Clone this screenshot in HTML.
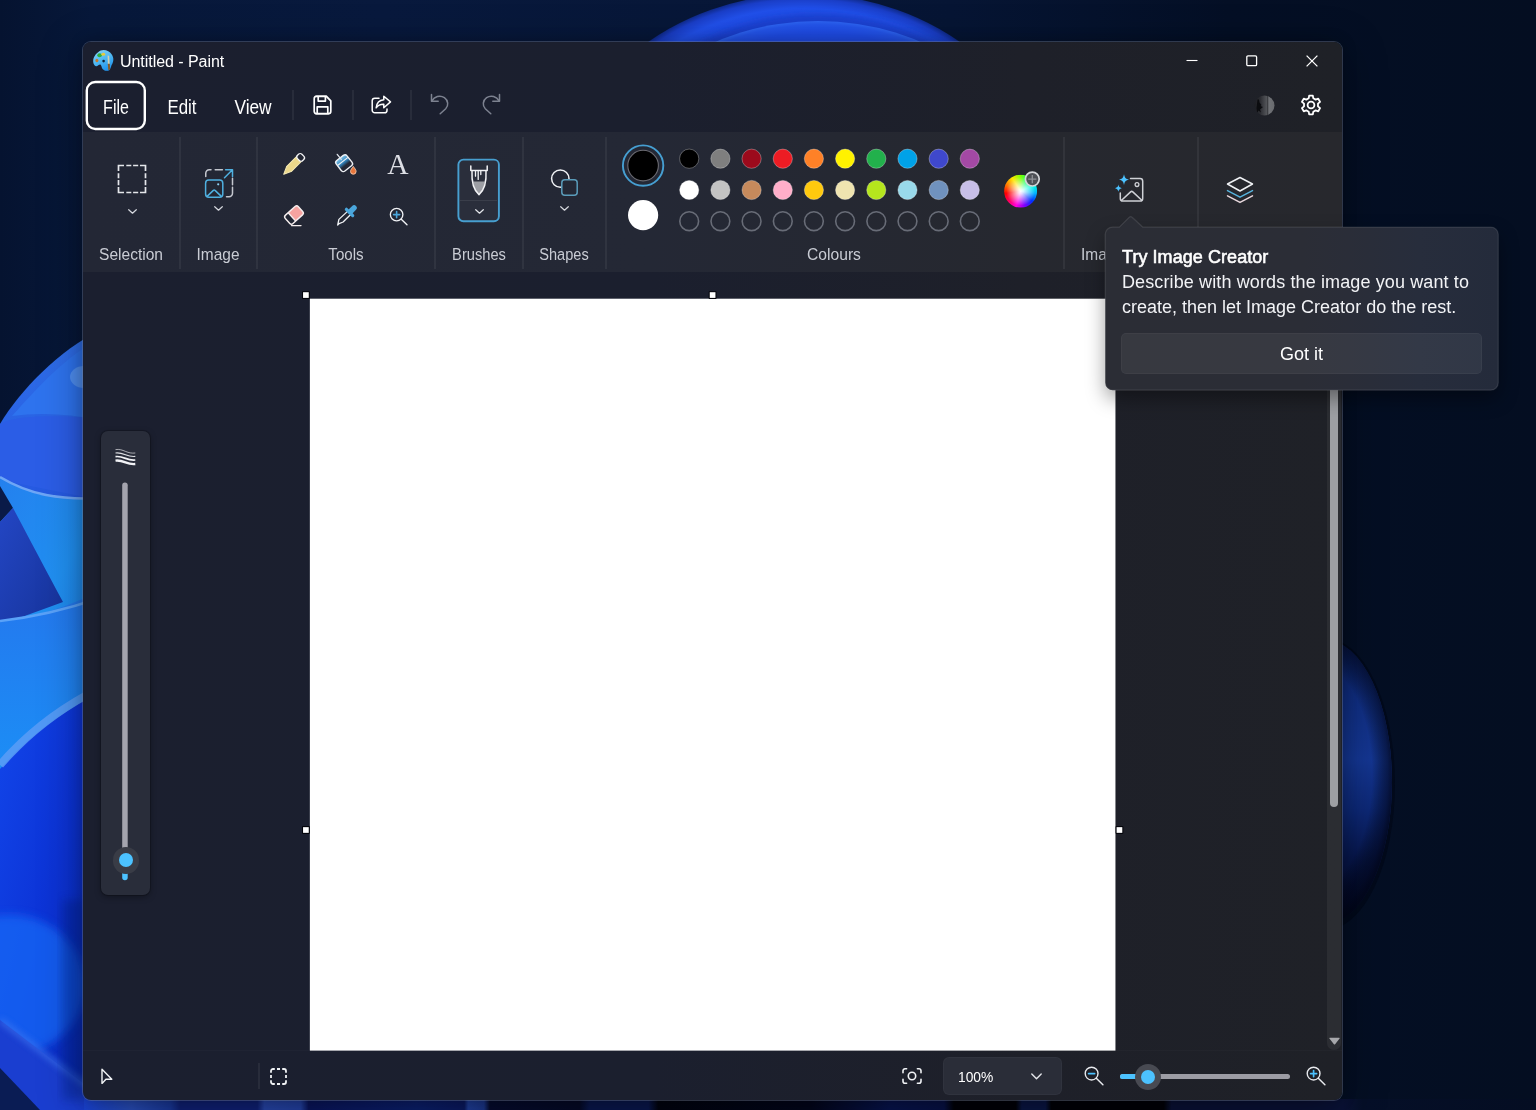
<!DOCTYPE html>
<html lang="en">
<head>
<meta charset="utf-8">
<title>Untitled - Paint</title>
<style>
*{box-sizing:border-box;margin:0;padding:0}
html,body{width:1536px;height:1110px;overflow:hidden;background:#04112a}
body{position:relative;font-family:"Liberation Sans","DejaVu Sans",sans-serif;color:#fff}
.abs{position:absolute}
#wall{position:absolute;left:0;top:0;width:1536px;height:1110px}
#win{position:absolute;left:83px;top:42px;width:1259px;height:1058px;border-radius:8px;
 background:linear-gradient(90deg,#1b1f2f 0%,#1b1f2e 45%,#1e2029 75%,#1f2127 100%);
 box-shadow:0 0 0 1px rgba(120,132,155,.38),0 10px 44px rgba(0,0,0,.36),0 0 16px rgba(0,0,0,.2);overflow:hidden}
#ribbon{position:absolute;left:0;top:90px;width:1259px;height:140px;
 background:linear-gradient(90deg,#232735 0%,#242835 45%,#26282f 75%,#27282d 100%)}
#status{position:absolute;left:0;top:1008px;width:1259px;height:50px;border-top:1px solid rgba(255,255,255,.02)}
.hd{position:absolute;width:8px;height:8px;background:#fff;border:1px solid #05060a}
.sep{position:absolute;width:2px;background:rgba(255,255,255,.06)}
.lbl{position:absolute;top:244px;font-size:16.300px;color:#c9ccd4;white-space:nowrap;transform:translateX(-50%) scaleX(var(--k,.95));line-height:20px}

#title{position:absolute;left:120px;top:51.500px;font-size:16px;line-height:20px;color:#fff;white-space:nowrap;letter-spacing:-.05px}
.menu{position:absolute;top:94.500px;font-size:20px;line-height:24px;color:#fff;white-space:nowrap;transform:translateX(-50%) scaleX(var(--k,.85))}
#filebtn{position:absolute;left:85.500px;top:81px;width:60.500px;height:49.500px;border:2px solid #fff;border-radius:9.500px}
svg.ic{position:absolute;overflow:visible}

.sw{position:absolute;width:20px;height:20px;border-radius:50%;border:1px solid rgba(255,255,255,.28)}
.sw.e{border:1.500px solid #6d717c;background:transparent}
#tipsh{position:absolute;left:1106px;top:228px;width:392px;height:162px;border-radius:8px;background:#2b2d36;box-shadow:0 8px 20px rgba(0,0,0,.4)}
#tip{position:absolute;left:1105px;top:227px;width:393px;height:163px}
#tip .t{position:absolute;left:17px;top:18px;font-size:18px;font-weight:400;-webkit-text-stroke:.55px #fff;letter-spacing:.06px;line-height:24px;white-space:nowrap}
#tip .d{position:absolute;left:17px;font-size:18px;line-height:24px;white-space:nowrap;color:#f2f3f6}
#gotit{position:absolute;left:16px;top:106px;width:361px;height:41px;border-radius:5px;background:rgba(255,255,255,.058);
 box-shadow:inset 0 0 0 1px rgba(255,255,255,.035);text-align:center;font-size:18px;line-height:43px}
#stage{position:absolute;left:0;top:0;width:1536px;height:1110px;will-change:transform}
</style>
</head>
<body>
<div id="stage">
<svg id="wall" viewBox="0 0 1536 1110">
<defs>
<filter id="bl3" x="-10%" y="-10%" width="120%" height="120%"><feGaussianBlur stdDeviation="3"/></filter><filter id="bl6" x="-20%" y="-20%" width="140%" height="140%"><feGaussianBlur stdDeviation="5"/></filter>
<linearGradient id="bgH" x1="0" y1="0" x2="1" y2="0">
 <stop offset="0" stop-color="#051330"/><stop offset=".06" stop-color="#07183a"/><stop offset=".25" stop-color="#08193d"/><stop offset=".62" stop-color="#061534"/><stop offset=".8" stop-color="#040f25"/><stop offset="1" stop-color="#040e21"/>
</linearGradient>
<radialGradient id="dome" cx="804" cy="200" r="243" gradientUnits="userSpaceOnUse" gradientTransform="translate(804 200) scale(1 .848) translate(-804 -200)">
 <stop offset="0" stop-color="#1f4ce8"/><stop offset=".8" stop-color="#1c46e2"/><stop offset=".93" stop-color="#2150ea"/><stop offset=".975" stop-color="#1a3ec8"/><stop offset="1" stop-color="#0f2a8a"/>
</radialGradient>
<radialGradient id="dome2" cx="818" cy="171" r="202" gradientUnits="userSpaceOnUse" gradientTransform="translate(818 171) scale(1 .7426) translate(-818 -171)">
 <stop offset="0" stop-color="#1e4ae6"/><stop offset=".92" stop-color="#1f4ce8"/><stop offset=".975" stop-color="#2455ec"/><stop offset="1" stop-color="#2d64f2"/>
</radialGradient>
<linearGradient id="rdome" x1="0" y1="0" x2="0" y2="1"><stop offset="0" stop-color="#0a1f60"/><stop offset=".2" stop-color="#102e82"/><stop offset=".42" stop-color="#143692"/><stop offset=".6" stop-color="#0d2876"/><stop offset=".78" stop-color="#07164a"/><stop offset=".92" stop-color="#040c30"/><stop offset="1" stop-color="#030820"/></linearGradient>
<radialGradient id="rdome2" cx="1318" cy="775" r="150" gradientUnits="userSpaceOnUse" gradientTransform="translate(1318 775) scale(.5 1) translate(-1318 -775)"><stop offset="0" stop-color="#000" stop-opacity="0"/><stop offset=".72" stop-color="#000" stop-opacity="0"/><stop offset=".93" stop-color="#020618" stop-opacity=".55"/><stop offset="1" stop-color="#020618" stop-opacity=".8"/></radialGradient>
<linearGradient id="p1" x1="0" y1="0" x2="0" y2="1"><stop offset="0" stop-color="#2f6fe8"/><stop offset="1" stop-color="#2456e0"/></linearGradient>
<linearGradient id="p2" x1="0" y1="0" x2="1" y2="1"><stop offset="0" stop-color="#2480ee"/><stop offset=".6" stop-color="#2090f2"/><stop offset="1" stop-color="#1e84ea"/></linearGradient>
<linearGradient id="p3" x1="0" y1="0" x2="1" y2="1"><stop offset="0" stop-color="#2346c4"/><stop offset="1" stop-color="#16339a"/></linearGradient>
<linearGradient id="p4" x1="0" y1="0" x2="0" y2="1"><stop offset="0" stop-color="#2478ee"/><stop offset="1" stop-color="#1b8ff6"/></linearGradient>
<linearGradient id="p5" x1="0" y1="0" x2="1" y2="1"><stop offset="0" stop-color="#1246ea"/><stop offset=".5" stop-color="#0c33d6"/><stop offset="1" stop-color="#0a2ab4"/></linearGradient>
</defs>
<rect width="1536" height="1110" fill="url(#bgH)"/>
<!-- top dome -->
<ellipse cx="804" cy="200" rx="243" ry="206" fill="url(#dome)"/>
<ellipse cx="818" cy="167" rx="205" ry="153" fill="#1436b8" opacity=".5" filter="url(#bl3)"/><ellipse cx="818" cy="171" rx="202" ry="150" fill="url(#dome2)"/>
<!-- right sphere -->
<ellipse cx="1325" cy="784" rx="70" ry="146" fill="#020716" opacity=".6"/><ellipse cx="1325" cy="782" rx="67" ry="142" fill="url(#rdome)"/><ellipse cx="1325" cy="782" rx="67" ry="142" fill="url(#rdome2)"/>
<!-- left petals -->
<path d="M100 330 C60 350 20 390 0 424 L0 500 L100 520 Z" fill="url(#p1)"/>
<path d="M100 340 C70 352 40 385 12 416 C40 412 70 414 100 420 Z" fill="#2f74ee" opacity=".9"/><ellipse cx="84" cy="377" rx="14" ry="11" fill="#5b98f4" opacity=".75"/><path d="M0 424 C10 418 40 413 100 419 L100 500 L0 480 Z" fill="#2b5de6"/>
<path d="M0 477 C30 495 60 500 100 498 L100 640 L0 640 Z" fill="url(#p2)"/>
<path d="M0 477 C30 495 60 500 100 498" fill="none" stroke="#6ea6f6" stroke-width="2.5"/>
<path d="M0 486 L13 508 L0 522 Z" fill="#0a1a48"/>
<path d="M0 522 L13 508 C30 540 48 574 63 602 L0 625 Z" fill="url(#p3)"/>
<path d="M0 621 C35 617 65 608 100 591 L100 780 L0 780 Z" fill="url(#p4)"/>
<path d="M0 621 C35 617 65 610 100 598" fill="none" stroke="#5aa2f8" stroke-width="2.5"/>
<path d="M0 769 C25 740 60 712 100 692 L100 1110 L0 1110 Z" fill="url(#p5)"/>
<path d="M0 765 C25 736 60 708 100 688" fill="none" stroke="#5b9cf6" stroke-width="8" opacity=".85"/>
<ellipse cx="10" cy="985" rx="75" ry="70" fill="#1468f6" opacity=".75" filter="url(#bl6)"/>
<path d="M0 1020 L100 1096 L100 1110 L0 1110 Z" fill="#1a3ed0"/>
<path d="M0 1020 L100 1096" stroke="#3f78f2" stroke-width="5" opacity=".75" filter="url(#bl3)"/>
<path d="M0 1068 L40 1110 L0 1110 Z" fill="#0a1c54"/>
<rect x="62" y="900" width="22" height="200" fill="#061a80" opacity=".35" filter="url(#bl6)"/>
<!-- bottom strip -->
<linearGradient id="bot" x1="0" y1="0" x2="1" y2="0"><stop offset="0.0000" stop-color="#1a44d8"/><stop offset="0.0142" stop-color="#1f48cc"/><stop offset="0.0326" stop-color="#2a50c0"/><stop offset="0.0597" stop-color="#1a3aa0"/><stop offset="0.0665" stop-color="#10227a"/><stop offset="0.1194" stop-color="#10227a"/><stop offset="0.1242" stop-color="#2848b0"/><stop offset="0.1493" stop-color="#2443a8"/><stop offset="0.1547" stop-color="#0a1660"/><stop offset="0.2293" stop-color="#0c2070"/><stop offset="0.2619" stop-color="#0b1a64"/><stop offset="0.2646" stop-color="#2040a0"/><stop offset="0.2754" stop-color="#1c3890"/><stop offset="0.2795" stop-color="#060c30"/><stop offset="0.3412" stop-color="#050a28"/><stop offset="0.3480" stop-color="#0a1850"/><stop offset="0.3887" stop-color="#0a1850"/><stop offset="0.3955" stop-color="#020410"/><stop offset="0.5007" stop-color="#03061c"/><stop offset="0.5550" stop-color="#081450"/><stop offset="0.5923" stop-color="#081248"/><stop offset="0.5991" stop-color="#010208"/><stop offset="0.6418" stop-color="#010208"/><stop offset="0.6459" stop-color="#0a1646"/><stop offset="0.6621" stop-color="#0a1646"/><stop offset="0.6662" stop-color="#010208"/><stop offset="0.7436" stop-color="#010208"/><stop offset="0.7490" stop-color="#0a1238"/><stop offset="0.8670" stop-color="#0a1238"/><stop offset="0.8806" stop-color="#050f28"/><stop offset="1.0000" stop-color="#040d22"/></linearGradient><rect x="84" y="1099" width="1452" height="11" fill="url(#bot)"/>
</svg>
<div id="win">
  <div id="ribbon"></div>
  <div id="status"></div>
</div>

<!-- title bar -->
<svg class="ic" style="left:92px;top:49px" width="22" height="23" viewBox="0 0 22 23">
 <defs><linearGradient id="pal" x1="0" y1="0" x2=".5" y2="1"><stop offset="0" stop-color="#8fd6f7"/><stop offset=".55" stop-color="#4fb8f2"/><stop offset="1" stop-color="#2496ee"/></linearGradient></defs>
 <path d="M11.500 1.100C15 1.100 18 3 19.600 5.300C21 7.500 21.600 9.500 21.300 11.300C21 13.500 20.400 15 19.600 16.100C19 18 18.500 20 17.500 21C16 22 14 22 12.600 21.500C11 20.800 10.300 19.800 9.900 18.800C9.500 17.500 9.300 16.300 8.300 15.600C7.200 15.200 5.500 17.600 4 17.200C2.500 16.600 1.500 15 1.300 13.400C1 11.500 1.300 9.700 2.100 8C3 6 4.400 4.400 6.100 3.200C7.700 2 9.500 1.100 11.500 1.100Z" fill="url(#pal)"/>
 <ellipse cx="7.600" cy="6.200" rx="2.300" ry="2" fill="#2fae3a"/>
 <ellipse cx="11.300" cy="5.200" rx="1.900" ry="1.500" fill="#e8c93a"/>
 <ellipse cx="4.900" cy="11.500" rx="1.500" ry="1.700" fill="#c9792a"/>
 <circle cx="11.600" cy="12.100" r="1.300" fill="#0e2238"/>
 <path d="M15.600 6.500l1.600.200.500 8.300-1.900.100z" fill="#cfd0b4"/>
 <path d="M15.800 14.800l2-.100.300 5.800-1.800.500z" fill="#8a5a24"/>
</svg>
<div id="title">Untitled - Paint</div>
<svg class="ic" style="left:1185.600px;top:54px" width="12" height="12" viewBox="0 0 12 12"><path d="M.5 6.500h11" stroke="#fff" stroke-width="1.100" fill="none"/></svg>
<svg class="ic" style="left:1245.800px;top:54.700px" width="12" height="12" viewBox="0 0 12 12"><rect x=".8" y=".8" width="9.800" height="9.800" rx="1.200" stroke="#fff" stroke-width="1.300" fill="none"/></svg>
<svg class="ic" style="left:1305.800px;top:54.600px" width="12" height="12" viewBox="0 0 12 12"><path d="M.6.600l10.800 10.800M11.400.600L.6 11.400" stroke="#fff" stroke-width="1.300" fill="none"/></svg>
<!-- menu bar -->
<svg class="ic" style="left:84px;top:79px" width="64" height="54" viewBox="0 0 64 54"><rect x="2.800" y="3" width="58" height="47" rx="8.500" fill="none" stroke="#fff" stroke-width="2.400"/></svg>
<div class="menu" style="left:116px;--k:.8">File</div>
<div class="menu" style="left:181.500px;--k:.845">Edit</div>
<div class="menu" style="left:252.700px;--k:.865">View</div>
<div class="sep" style="left:292px;top:90px;height:30px"></div>
<div class="sep" style="left:352px;top:90px;height:30px"></div>
<div class="sep" style="left:410px;top:90px;height:30px"></div>
<!-- save -->
<svg class="ic" style="left:313px;top:95px" width="19" height="20" viewBox="0 0 19 19" preserveAspectRatio="none" fill="none" stroke="#fff" stroke-width="1.700" stroke-linejoin="round">
 <path d="M3.500 1.200h9.800l4.500 4.300v10a2.300 2.300 0 0 1-2.300 2.300h-12a2.300 2.300 0 0 1-2.300-2.300v-12a2.300 2.300 0 0 1 2.300-2.300z"/>
 <path d="M5.200 1.400v4.400h7.200v-4.400"/><path d="M4.200 17.600v-6.400h10.600v6.400"/>
</svg>
<!-- share -->
<svg class="ic" style="left:371px;top:95px" width="21" height="19" viewBox="0 0 21 19" fill="none" stroke="#fff" stroke-width="1.500" stroke-linejoin="round" stroke-linecap="round">
 <path d="M8 3.200h-4.200a2.600 2.600 0 0 0-2.600 2.600v9.400a2.600 2.600 0 0 0 2.600 2.600h9.600a2.600 2.600 0 0 0 2.600-2.600v-1.200"/>
 <path d="M12.800 1.200l6.700 5.700-6.700 5.800v-3.400c-3.600-.2-5.800 1-7.600 3.500.4-4.300 2.800-7.600 7.600-8z"/>
</svg>
<!-- undo / redo -->
<svg class="ic" style="left:430px;top:93px" width="20" height="22" viewBox="0 0 20 22" fill="none" stroke="#7d8290" stroke-width="1.500" stroke-linecap="round" stroke-linejoin="round">
 <path d="M1.500 1.500v6.700h6.700"/><path d="M1.800 8c2.600-4.300 8-6.500 12.600-3.300 4 2.800 4.300 8 1.300 11l-5.500 5"/>
</svg>
<svg class="ic" style="left:481px;top:93px" width="20" height="22" viewBox="0 0 20 22" fill="none" stroke="#7d8290" stroke-width="1.500" stroke-linecap="round" stroke-linejoin="round">
 <path d="M18.500 1.500v6.700h-6.700"/><path d="M18.200 8c-2.600-4.300-8-6.500-12.600-3.300-4 2.800-4.300 8-1.300 11l5.500 5"/>
</svg>
<!-- avatar + settings -->
<svg class="ic" style="left:1254px;top:95px" width="21" height="21" viewBox="0 0 21 21"><defs><clipPath id="av"><circle cx="10.500" cy="10.500" r="10"/></clipPath><linearGradient id="avg" x1="0" y1="0" x2="1" y2="0"><stop offset="0" stop-color="#1b1c21"/><stop offset=".3" stop-color="#2c2d32"/><stop offset=".62" stop-color="#55575b"/><stop offset=".66" stop-color="#2a2b2f"/><stop offset=".7" stop-color="#707276"/><stop offset="1" stop-color="#67696d"/></linearGradient></defs>
 <g clip-path="url(#av)"><rect width="21" height="21" fill="url(#avg)"/><path d="M3.500 4.500l1.500 0 .5 3 2 2.500-1 1 2.500 1-3 2.500 1 3-2.500-2-1.500 2.500-.5-5z" fill="#0b0c0f"/></g></svg>
<svg class="ic" style="left:1299.500px;top:94px" width="22" height="22" viewBox="0 0 22 22" fill="none" stroke="#fff" stroke-width="1.800" stroke-linejoin="round">
 <path d="M8.69 4.29 L9.17 1.58 L12.83 1.58 L13.31 4.29 L15.66 5.64 L18.25 4.70 L20.08 7.87 L17.97 9.65 L17.97 12.35 L20.08 14.13 L18.25 17.30 L15.66 16.36 L13.31 17.71 L12.83 20.42 L9.17 20.42 L8.69 17.71 L6.34 16.36 L3.75 17.30 L1.92 14.13 L4.03 12.35 L4.03 9.65 L1.92 7.87 L3.75 4.70 L6.34 5.64Z"/><circle cx="11" cy="11" r="3.400"/>
</svg>

<!-- ribbon separators -->
<div class="sep" style="left:179px;top:137px;height:132px"></div>
<div class="sep" style="left:256px;top:137px;height:132px"></div>
<div class="sep" style="left:434px;top:137px;height:132px"></div>
<div class="sep" style="left:522px;top:137px;height:132px"></div>
<div class="sep" style="left:605px;top:137px;height:132px"></div>
<div class="sep" style="left:1063px;top:137px;height:132px"></div>
<div class="sep" style="left:1197px;top:137px;height:132px"></div>
<!-- labels -->
<div class="lbl" style="left:131px;--k:.955">Selection</div>
<div class="lbl" style="left:218px;--k:.95">Image</div>
<div class="lbl" style="left:346px;--k:.93">Tools</div>
<div class="lbl" style="left:478.500px;--k:.9">Brushes</div>
<div class="lbl" style="left:564px;--k:.895">Shapes</div>
<div class="lbl" style="left:834px;--k:.96">Colours</div>
<div class="lbl" style="left:1081px;transform-origin:0 50%;transform:scaleX(.95)">Image Creator</div>
<!-- selection -->
<svg class="ic" style="left:117px;top:163.800px" width="30" height="30" viewBox="0 0 30 30" fill="none" stroke="#e4e6ea" stroke-width="1.700">
 <path d="M1.500 7v-5.500h5.500M9.300 1.500h5M16.100 1.500h5.100M23 1.500h5.500v5.500M28.500 9.300v5M28.500 16.100v5.100M28.500 23v5.500h-5.500M21.200 28.500h-5.100M14.300 28.500h-5M7 28.500h-5.500v-5.500M1.500 21.200v-5.100M1.500 14.300v-5"/>
</svg>
<svg class="ic" style="left:127.500px;top:208.500px" width="9" height="5" viewBox="0 0 9 5"><path d="M.7.700L4.500 4.200 8.300.700" fill="none" stroke="#d6d8de" stroke-width="1.200" stroke-linecap="round" stroke-linejoin="round"/></svg>
<!-- image group -->
<svg class="ic" style="left:203.500px;top:167.500px" width="31" height="31" viewBox="0 0 31 31" fill="none" stroke-width="1.500" stroke-linecap="round" stroke-linejoin="round">
 <g stroke="#c3c6ce"><path d="M1.750 8.500V5.200a3.500 3.500 0 0 1 3.500-3.500H7M11.200 1.700H18.400M28.500 10.200V16.800M28.500 19.300V25.200a3.500 3.500 0 0 1-3.500 3.500H22.500"/></g>
 <g stroke="#4fb0e0"><path d="M21.600 1.700H28.500V8.600M28.200 2L20.500 9.700"/>
 <rect x="1.600" y="12" width="17.200" height="17.200" rx="3.200" fill="#232734"/><path d="M3.600 27.900l5.500-5.300a1.600 1.600 0 0 1 2.200 0l5.500 5.300"/><circle cx="14.200" cy="16.300" r="1.100" fill="#8fd0f0" stroke="none"/></g>
</svg>
<svg class="ic" style="left:214px;top:206px" width="9" height="5" viewBox="0 0 9 5"><path d="M.7.700L4.500 4.200 8.300.700" fill="none" stroke="#d6d8de" stroke-width="1.200" stroke-linecap="round" stroke-linejoin="round"/></svg>
<!-- pencil -->
<svg class="ic" style="left:282px;top:154px" width="22" height="22" viewBox="0 0 22 22">
 <g transform="rotate(45 11 11)">
  <path d="M7.500 1.500h7v14.800l-3.500 7.800-3.500-7.800z" fill="#ecd88a" stroke="#f3e7b4" stroke-width="1" stroke-linejoin="round"/>
  <rect x="7.300" y="-2.900" width="7.400" height="6.200" rx="2.400" fill="#232734" stroke="#f4f4f6" stroke-width="1.300"/>
 </g>
</svg>
<!-- bucket -->
<svg class="ic" style="left:335px;top:153px" width="23" height="22" viewBox="0 0 23 22">
 <defs><linearGradient id="bk" x1="0" y1="0" x2="0" y2="1"><stop offset="0" stop-color="#7cc3ea"/><stop offset=".45" stop-color="#2f7db4"/><stop offset=".7" stop-color="#232734"/></linearGradient></defs>
 <g transform="rotate(-38 9 10)">
  <rect x="2.200" y="3.600" width="13.600" height="13.200" rx="2.600" fill="url(#bk)" stroke="#eef0f4" stroke-width="1.400"/>
  <path d="M2.400 8h13.200" stroke="#eef0f4" stroke-width="1.100"/>
  <path d="M9 5.500v-6.500" stroke="#dfe3ea" stroke-width="1.300" stroke-linecap="round"/>
 </g>
 <path d="M18.300 13.400c1.500 2 2.800 3.600 2.800 5a2.800 2.800 0 0 1-5.600 0c0-1.400 1.300-3 2.800-5z" fill="#e8763c" stroke="#f6c9ad" stroke-width=".9"/>
</svg>
<!-- text A -->
<div class="abs" style="left:385px;top:147px;width:26px;height:34px;text-align:center;font-family:'Liberation Serif','DejaVu Serif',serif;font-size:29.500px;line-height:34px;color:#dcdee4">A</div>
<!-- eraser -->
<svg class="ic" style="left:283px;top:204px" width="23" height="23" viewBox="0 0 23 23">
 <g transform="rotate(-42 11 11)">
  <rect x="2.200" y="5.400" width="17.600" height="11.200" rx="2.400" fill="#f6a3a0"/>
  <path d="M2.200 7.800a2.400 2.400 0 0 1 2.400-2.400h3.600v11.200h-3.600a2.400 2.400 0 0 1-2.400-2.400z" fill="#232734"/>
  <rect x="2.200" y="5.400" width="17.600" height="11.200" rx="2.400" fill="none" stroke="#f5eeee" stroke-width="1.400"/>
  <path d="M8.200 5.400v11.200" stroke="#f5eeee" stroke-width="1.300"/>
 </g>
 <path d="M8.500 21.600h9.500" stroke="#f5eeee" stroke-width="1.400" stroke-linecap="round"/>
</svg>
<!-- colour picker -->
<svg class="ic" style="left:335.500px;top:203px" width="23" height="23" viewBox="0 0 23 23">
 <path d="M12.300 7.600l3.100 3.100-8.300 8.300-4 1.600-1.400 1.400 1.200-5.600z" fill="#232734" stroke="#f0f2f5" stroke-width="1.300" stroke-linejoin="round"/>
 <path d="M10.400 6.300l6.300 6.300" stroke="#4aa6dc" stroke-width="3.200" stroke-linecap="round"/>
 <path d="M14.500 8.500l3.600-3.600" stroke="#4aa6dc" stroke-width="5.400" stroke-linecap="round"/>
</svg>
<!-- magnifier -->
<svg class="ic" style="left:388.500px;top:207px" width="20" height="19" viewBox="0 0 21 20" fill="none" stroke-linecap="round">
 <circle cx="8" cy="8" r="6.600" stroke="#f0f2f5" stroke-width="1.400"/><path d="M12.900 12.900l6 5.700" stroke="#f0f2f5" stroke-width="1.500"/>
 <path d="M8 4.800v6.400M4.800 8h6.400" stroke="#4aa6dc" stroke-width="1.700"/>
</svg>
<!-- brushes -->
<svg class="ic" style="left:456px;top:157px" width="46" height="67" viewBox="0 0 46 67"><rect x="2.400" y="2.600" width="40.500" height="61.600" rx="5" fill="#2a2e3b" stroke="#479fd0" stroke-width="1.900"/></svg>
<div class="abs" style="left:460px;top:200px;width:37px;height:1px;background:rgba(255,255,255,.08)"></div>
<svg class="ic" style="left:468px;top:164px" width="22" height="33" viewBox="0 0 22 33" fill="none" stroke="#f2f3f6" stroke-width="1.500" stroke-linecap="round" stroke-linejoin="round">
 <path d="M5.300 17.600h11.400c-.4 6-2.600 10.500-5.700 12.800-3.100-2.300-5.300-6.800-5.700-12.800z" fill="#9c9ea4" stroke="none"/>
 <path d="M2.800 2v4.600h16.400v-4.600"/>
 <path d="M4 6.800c-.6 11 2 19.600 7 23.800 5-4.200 7.600-12.800 7-23.800"/>
 <path d="M7.500 7.200v5M10.200 7.200v8.200M12.800 7.200v3.400" stroke-width="1.300"/>
</svg>
<svg class="ic" style="left:474.500px;top:209px" width="9" height="5" viewBox="0 0 9 5"><path d="M.7.700L4.500 4.200 8.300.700" fill="none" stroke="#e4e6ea" stroke-width="1.200" stroke-linecap="round" stroke-linejoin="round"/></svg>
<!-- shapes -->
<svg class="ic" style="left:550px;top:168px" width="29" height="29" viewBox="0 0 29 29" fill="none" stroke-width="1.500">
 <circle cx="10.300" cy="10.600" r="8.700" stroke="#f0f2f5"/>
 <rect x="11.800" y="11.800" width="15.400" height="15.400" rx="3" fill="#242835" stroke="#5a9cba"/>
</svg>
<svg class="ic" style="left:560px;top:206px" width="9" height="5" viewBox="0 0 9 5"><path d="M.7.700L4.500 4.200 8.300.700" fill="none" stroke="#d6d8de" stroke-width="1.200" stroke-linecap="round" stroke-linejoin="round"/></svg>

<!-- colours -->
<svg class="ic" style="left:0;top:0" width="1536" height="300" viewBox="0 0 1536 300">
<circle cx="689.2" cy="158.700" r="9.600" fill="#000000" stroke="rgba(255,255,255,.30)" stroke-width="1"/><circle cx="720.4" cy="158.700" r="9.600" fill="#7f7f7f" stroke="rgba(255,255,255,.30)" stroke-width="1"/><circle cx="751.6" cy="158.700" r="9.600" fill="#9c0a1c" stroke="rgba(255,255,255,.30)" stroke-width="1"/><circle cx="782.8" cy="158.700" r="9.600" fill="#ed1c24" stroke="rgba(255,255,255,.30)" stroke-width="1"/><circle cx="813.9" cy="158.700" r="9.600" fill="#ff8127" stroke="rgba(255,255,255,.30)" stroke-width="1"/><circle cx="845.1" cy="158.700" r="9.600" fill="#fff200" stroke="rgba(255,255,255,.30)" stroke-width="1"/><circle cx="876.3" cy="158.700" r="9.600" fill="#22b14c" stroke="rgba(255,255,255,.30)" stroke-width="1"/><circle cx="907.5" cy="158.700" r="9.600" fill="#00a2e8" stroke="rgba(255,255,255,.30)" stroke-width="1"/><circle cx="938.7" cy="158.700" r="9.600" fill="#3f48cc" stroke="rgba(255,255,255,.30)" stroke-width="1"/><circle cx="969.8" cy="158.700" r="9.600" fill="#a349a4" stroke="rgba(255,255,255,.30)" stroke-width="1"/>
<circle cx="689.2" cy="190" r="9.600" fill="#ffffff" stroke="rgba(255,255,255,.30)" stroke-width="1"/><circle cx="720.4" cy="190" r="9.600" fill="#c3c3c3" stroke="rgba(255,255,255,.30)" stroke-width="1"/><circle cx="751.6" cy="190" r="9.600" fill="#c68a5c" stroke="rgba(255,255,255,.30)" stroke-width="1"/><circle cx="782.8" cy="190" r="9.600" fill="#ffaec9" stroke="rgba(255,255,255,.30)" stroke-width="1"/><circle cx="813.9" cy="190" r="9.600" fill="#ffc90e" stroke="rgba(255,255,255,.30)" stroke-width="1"/><circle cx="845.1" cy="190" r="9.600" fill="#efe4b0" stroke="rgba(255,255,255,.30)" stroke-width="1"/><circle cx="876.3" cy="190" r="9.600" fill="#b5e61d" stroke="rgba(255,255,255,.30)" stroke-width="1"/><circle cx="907.5" cy="190" r="9.600" fill="#99d9ea" stroke="rgba(255,255,255,.30)" stroke-width="1"/><circle cx="938.7" cy="190" r="9.600" fill="#7092be" stroke="rgba(255,255,255,.30)" stroke-width="1"/><circle cx="969.8" cy="190" r="9.600" fill="#c8bfe7" stroke="rgba(255,255,255,.30)" stroke-width="1"/>
<circle cx="689.2" cy="221.200" r="9.400" fill="none" stroke="#686c77" stroke-width="1.600"/><circle cx="720.4" cy="221.200" r="9.400" fill="none" stroke="#686c77" stroke-width="1.600"/><circle cx="751.6" cy="221.200" r="9.400" fill="none" stroke="#686c77" stroke-width="1.600"/><circle cx="782.8" cy="221.200" r="9.400" fill="none" stroke="#686c77" stroke-width="1.600"/><circle cx="813.9" cy="221.200" r="9.400" fill="none" stroke="#686c77" stroke-width="1.600"/><circle cx="845.1" cy="221.200" r="9.400" fill="none" stroke="#686c77" stroke-width="1.600"/><circle cx="876.3" cy="221.200" r="9.400" fill="none" stroke="#686c77" stroke-width="1.600"/><circle cx="907.5" cy="221.200" r="9.400" fill="none" stroke="#686c77" stroke-width="1.600"/><circle cx="938.7" cy="221.200" r="9.400" fill="none" stroke="#686c77" stroke-width="1.600"/><circle cx="969.8" cy="221.200" r="9.400" fill="none" stroke="#686c77" stroke-width="1.600"/>
<circle cx="643.100" cy="165.600" r="20.200" fill="none" stroke="#469fd2" stroke-width="1.900"/><circle cx="643.100" cy="165.600" r="15.300" fill="#000" stroke="#6b6b72" stroke-width="1.100"/><circle cx="643.100" cy="215.100" r="15.100" fill="#fff"/>
</svg>

<div class="abs" style="left:1004px;top:175px;width:33px;height:33px;transform:translate(.1px,-.35px);border-radius:50%;background:radial-gradient(circle at 50% 50%,#fff 0%,rgba(255,255,255,.85) 12%,rgba(255,255,255,0) 62%),conic-gradient(from 0deg,#7dff00,#00ff6a,#00ffe0,#00b4ff,#0030ff,#7a00ff,#ff00e0,#ff0060,#ff0000,#ff7a00,#ffe600,#7dff00)"></div>
<svg class="ic" style="left:1023px;top:169.500px" width="19" height="19" viewBox="0 0 19 19"><circle cx="9.300" cy="9.100" r="6.900" fill="#4f5157" stroke="#d4d5d9" stroke-width="1.700"/><path d="M9.300 5v8.200M5.200 9.100h8.200" stroke="#8f9197" stroke-width="1.300" fill="none"/></svg>
<!-- image creator -->
<svg class="ic" style="left:1113px;top:173px" width="32" height="30" viewBox="0 0 32 30" fill="none" stroke-linejoin="round" stroke-linecap="round">
 <path d="M17.500 5.600h9.600a2.600 2.600 0 0 1 2.600 2.600v17.200a2.600 2.600 0 0 1-2.600 2.600h-17.200a2.600 2.600 0 0 1-2.600-2.600v-5.500" stroke="#cfd1d6" stroke-width="1.500"/>
 <path d="M8.600 27.300l9-8.400a1.600 1.600 0 0 1 2.200 0l9 8.400" stroke="#cfd1d6" stroke-width="1.500"/>
 <circle cx="24" cy="11.600" r="1.900" stroke="#cfd1d6" stroke-width="1.300"/>
 <path d="M11 1.200c.5 3.200 1.700 4.700 5 5.400-3.300.7-4.500 2.200-5 5.400-.5-3.200-1.700-4.700-5-5.400 3.300-.7 4.500-2.200 5-5.400z" fill="#4cc2ff"/>
 <path d="M5.400 11.600c.35 2.100 1.150 3.100 3.400 3.600-2.250.5-3.050 1.500-3.400 3.600-.35-2.100-1.150-3.100-3.400-3.600 2.250-.5 3.050-1.500 3.400-3.600z" fill="#4cc2ff"/>
</svg>
<!-- layers -->
<svg class="ic" style="left:1226px;top:176px" width="28" height="28" viewBox="0 0 28 28" fill="none" stroke-width="1.500" stroke-linejoin="round" stroke-linecap="round">
 <path d="M1.500 19.800l12.500 6.600 12.500-6.600" stroke="#e9d9de"/>
 <path d="M1.500 14.600l12.500 6.600 12.500-6.600" stroke="#58b4de"/>
 <path d="M14 1.500l12.500 6.500-12.500 7-12.500-7z" stroke="#f0f2f5"/>
</svg>

<svg class="ic" style="left:0;top:0" width="1536" height="1110" viewBox="0 0 1536 1110"><rect id="canvas" x="309.850" y="298.700" width="805.600" height="751.900" fill="#fff"/><rect x="302.00" y="291.15" width="7.800" height="7.800" rx=".8" fill="#03040a"/><rect x="303.05" y="292.20" width="5.700" height="5.700" fill="#fff"/><rect x="708.70" y="291.15" width="7.800" height="7.800" rx=".8" fill="#03040a"/><rect x="709.75" y="292.20" width="5.700" height="5.700" fill="#fff"/><rect x="302.00" y="826.10" width="7.800" height="7.800" rx=".8" fill="#03040a"/><rect x="303.05" y="827.15" width="5.700" height="5.700" fill="#fff"/><rect x="1115.55" y="826.10" width="7.800" height="7.800" rx=".8" fill="#03040a"/><rect x="1116.60" y="827.15" width="5.700" height="5.700" fill="#fff"/></svg>
<!-- brush size panel -->
<div class="abs" style="left:101px;top:431px;width:48.500px;height:464px;border-radius:7px;background:#292d3a;box-shadow:0 2px 6px rgba(0,0,0,.35),0 0 0 1px rgba(0,0,0,.18)"></div>
<svg class="ic" style="left:114px;top:447px" width="23" height="20" viewBox="0 0 23 20" fill="none" stroke="#f2f3f6" stroke-linecap="butt">
 <path d="M1.500 2.600c4-.6 6.500.4 10 1.800s6 2 9.800 1.600" stroke-width=".8" opacity=".8"/>
 <path d="M1.500 6c4-.6 6.500.4 10 1.800s6 2 9.800 1.600" stroke-width="1.200" opacity=".9"/>
 <path d="M1.500 9.600c4-.6 6.500.4 10 1.800s6 2 9.800 1.600" stroke-width="1.700"/>
 <path d="M1.500 13.600c4-.6 6.500.4 10 1.800s6 2 9.800 1.600" stroke-width="2.300"/>
</svg>
<svg class="ic" style="left:0;top:0" width="200" height="1110" viewBox="0 0 200 1110"><rect x="122.200" y="482.600" width="5.500" height="370" rx="2.750" fill="#a4a4ae"/><rect x="122.200" y="862" width="5.500" height="18.200" rx="2.750" fill="#4cc2ff"/></svg>
<div class="abs" style="left:112.500px;top:847px;width:26.500px;height:26.500px;border-radius:50%;background:#393c46"></div>
<div class="abs" style="left:118.700px;top:853.200px;width:14.200px;height:14.200px;border-radius:50%;background:#4cc2ff"></div>
<!-- scrollbar -->
<div class="abs" style="left:1327px;top:272px;width:14px;height:778px;border-radius:0 0 7px 7px;background:rgba(255,255,255,.055)"></div>
<div class="abs" style="left:1330px;top:380px;width:8px;height:427px;border-radius:4px;background:#9d9fa3"></div>
<svg class="ic" style="left:1328.500px;top:1036.500px" width="11" height="8" viewBox="0 0 11 8"><path d="M.8.800h9.400a.5.500 0 0 1 .4.800l-4.500 5.600a.8.800 0 0 1-1.200 0L.4 1.600a.5.500 0 0 1 .4-.8z" fill="#a6a7ab"/></svg>
<!-- status bar -->
<svg class="ic" style="left:101px;top:1068px" width="12" height="17" viewBox="0 0 12 17"><path d="M1 1.200v14.200l3.900-4.100h5.900z" fill="none" stroke="#f0f2f5" stroke-width="1.400" stroke-linejoin="round"/></svg>
<div class="sep" style="left:258px;top:1063px;height:26px"></div>
<svg class="ic" style="left:270px;top:1068px" width="17" height="17" viewBox="0 0 17 17" fill="none" stroke="#f0f2f5" stroke-width="1.800" stroke-linecap="butt">
 <path d="M1 4.800v-1.800a2 2 0 0 1 2-2h1.800M7 1h3M12.200 1h1.800a2 2 0 0 1 2 2v1.800M16 7v3M16 12.200v1.800a2 2 0 0 1-2 2h-1.800M10 16h-3M4.800 16h-1.800a2 2 0 0 1-2-2v-1.800M1 10v-3"/>
</svg>
<svg class="ic" style="left:901.500px;top:1068px" width="20" height="16" viewBox="0 0 20 16" fill="none" stroke="#f0f2f5" stroke-width="1.600" stroke-linecap="round" stroke-linejoin="round">
 <path d="M1 4.800v-2a2 2 0 0 1 2-2h1.600M15.400.8h1.600a2 2 0 0 1 2 2v2M19 11.200v2a2 2 0 0 1-2 2h-1.600M4.600 15.200h-1.600a2 2 0 0 1-2-2v-2"/><circle cx="10" cy="8" r="3.700"/>
</svg>
<div class="abs" style="left:943px;top:1057px;width:119px;height:38px;border-radius:6px;background:#2a2d38;box-shadow:inset 0 0 0 1px rgba(255,255,255,.03)"></div>
<div class="abs" style="left:958px;top:1066.500px;font-size:15.500px;line-height:20px;color:#fff;white-space:nowrap;transform-origin:0 50%;transform:scaleX(.89)">100%</div>
<svg class="ic" style="left:1031px;top:1073px" width="11" height="7" viewBox="0 0 11 7"><path d="M.8.900L5.500 5.700 10.200.900" fill="none" stroke="#e4e6ea" stroke-width="1.400" stroke-linecap="round" stroke-linejoin="round"/></svg>
<svg class="ic" style="left:1084px;top:1066px" width="20" height="20" viewBox="0 0 20 20" fill="none" stroke-linecap="round">
 <circle cx="7.600" cy="7.600" r="6.400" stroke="#e8eaee" stroke-width="1.400"/><path d="M12.300 12.300l6.600 6.400" stroke="#e8eaee" stroke-width="1.500"/><path d="M4.600 7.600h6" stroke="#4cc2ff" stroke-width="1.700"/>
</svg>
<div class="abs" style="left:1120px;top:1073.700px;width:169.500px;height:5.600px;border-radius:2.800px;background:#9c9ca4"></div>
<div class="abs" style="left:1120px;top:1073.700px;width:28px;height:5.600px;border-radius:2.800px;background:#4cc2ff"></div>
<div class="abs" style="left:1134.700px;top:1063.500px;width:26.400px;height:26.400px;border-radius:50%;background:#484a52"></div>
<div class="abs" style="left:1140.700px;top:1069.500px;width:14.400px;height:14.400px;border-radius:50%;background:#4cc2ff"></div>
<svg class="ic" style="left:1305.500px;top:1066px" width="20" height="20" viewBox="0 0 20 20" fill="none" stroke-linecap="round">
 <circle cx="7.600" cy="7.600" r="6.400" stroke="#e8eaee" stroke-width="1.400"/><path d="M12.300 12.300l6.600 6.400" stroke="#e8eaee" stroke-width="1.500"/><path d="M4.600 7.600h6M7.600 4.600v6" stroke="#4cc2ff" stroke-width="1.700"/>
</svg>
<!-- tooltip -->
<div id="tipsh"></div>
<svg class="ic" style="left:0;top:0" width="1536" height="420" viewBox="0 0 1536 420"><defs><linearGradient id="tipg" gradientUnits="userSpaceOnUse" x1="1105" y1="0" x2="1498" y2="0"><stop offset="0" stop-color="#2b2d35"/><stop offset=".5" stop-color="#2b2d36"/><stop offset=".62" stop-color="#2a2d38"/><stop offset=".8" stop-color="#272d3c"/><stop offset="1" stop-color="#242b3b"/></linearGradient></defs><path d="M1112.7 227.1H1119.3L1129.3 217.3Q1130.7 215.9 1132.1 217.3L1142.7 227.1H1490.8A7.5 7.5 0 0 1 1498.3 234.6V382.7A7.5 7.5 0 0 1 1490.8 390.2H1112.7A7.5 7.5 0 0 1 1105.2 382.7V234.6A7.5 7.5 0 0 1 1112.7 227.1Z" fill="url(#tipg)" stroke="rgba(255,255,255,.1)" stroke-width="1.300"/></svg>
<div id="tip">
 <div class="t">Try Image Creator</div>
 <div class="d" style="top:42.500px;letter-spacing:.12px">Describe with words the image you want to</div>
 <div class="d" style="top:67.500px">create, then let Image Creator do the rest.</div>
 <div id="gotit">Got it</div>
</div>
</div>
</body>
</html>
